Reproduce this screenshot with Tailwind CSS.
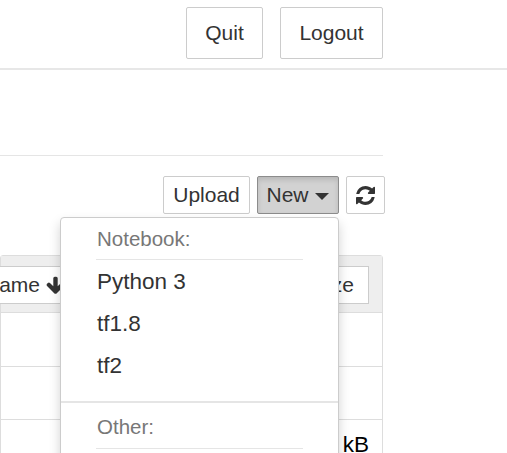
<!DOCTYPE html>
<html lang="en">

<head>
    <meta charset="UTF-8">
    <title>Home</title>
    <script src="https://cdn.jsdelivr.net/npm/@tailwindcss/browser@4"></script>
</head>

<body class="bg-white">
    <div class="relative w-[507px] h-[453px] overflow-hidden font-['Liberation_Sans',Arial,sans-serif] text-[21px] text-[#333]">
        <header class="h-[70px] border-b-2 border-[#e7e7e7] flex justify-end items-start gap-[17px] pt-[7px] pr-[124px]">
            <button class="w-[77px] h-[52px] border border-[#ccc] rounded-[2px] bg-white">Quit</button>
            <button class="w-[103px] h-[52px] border border-[#ccc] rounded-[2px] bg-white">Logout</button>
        </header>

        <main class="w-[383px] pt-[85px]">
            <hr class="border-t border-[#e5e5e5]">

            <menu class="flex justify-end gap-[7px] mt-[20px] -mr-[2px]">
                <button class="w-[87px] h-[38px] border border-[#ccc] rounded-[2px] bg-white">Upload</button>
                <button class="w-[82px] h-[38px] border border-[#8c8c8c] rounded-[2px] bg-[#d2d2d2] shadow-[inset_0_3px_5px_rgba(0,0,0,0.125)] flex items-center justify-center gap-[6px] pr-[1px]">
                    New
                    <span class="w-0 h-0 border-x-[7px] border-x-transparent border-t-[7px] border-t-[#333] mt-[2px]"></span>
                </button>
                <button class="w-[39px] h-[38px] border border-[#ccc] rounded-[2px] bg-white flex items-center justify-center">
                    <svg width="19" height="19" viewBox="0 0 1536 1536" fill="#333">
                        <path d="M1511 928q0 5-1 7-64 268-268 434.5T764 1536q-146 0-282.500-55T238 1324l-129 129q-19 19-45 19t-45-19-19-45V960q0-26 19-45t45-19h448q26 0 45 19t19 45-19 45l-137 137q71 66 161 102t187 36q134 0 250-65t186-179q11-17 53-117 8-23 30-23h192q13 0 22.500 9.500t9.500 22.500zm25-800v448q0 26-19 45t-45 19h-448q-26 0-45-19t-19-45 19-45l138-138q-148-137-349-137-134 0-250 65T332 500q-11 17-53 117-8 23-30 23H50q-13 0-22.500-9.500T18 608v-7q65-268 270-434.500T768 0q146 0 284 55.500T1297 212l130-129q19-19 45-19t45 19 19 45z"/>
                    </svg>
                </button>
            </menu>

            <section class="mt-[41px] border border-[#ddd] rounded-t-[3px]">
                <div class="h-[57px] bg-[#eee] border-b border-[#ddd] flex items-start justify-between pt-[10px] pr-[13px]">
                    <button class="w-[120px] h-[38px] border border-[#ccc] bg-white flex items-center justify-end gap-[6px] pr-[10px] -ml-[45px]">
                        Name
                        <svg width="19" height="19" viewBox="0 0 1664 1664" fill="#333" class="shrink-0">
                            <path d="M1611 780q0 53-37 90l-651 652q-39 37-91 37-53 0-90-37L91 870q-38-36-38-90 0-53 38-91l74-75q39-37 91-37 53 0 90 37l294 294V204q0-52 38-90t90-38h128q52 0 90 38t38 90v704l294-294q37-37 90-37 52 0 91 37l75 75q37 39 37 91z"/>
                        </svg>
                    </button>
                    <button class="w-[70px] h-[38px] border border-[#ccc] bg-white text-right pr-[14px]">Size</button>
                </div>
                <div class="h-[54px] border-b border-[#ddd]"></div>
                <div class="h-[53px] border-b border-[#ddd]"></div>
                <div class="h-[42px] flex justify-end items-end pr-[13px] text-black text-[22.500px]">kB</div>
            </section>
        </main>

        <div class="absolute left-[60px] top-[217px] w-[279px] h-[260px] bg-white border border-[#ccc] rounded-[4px] shadow-[0_6px_12px_rgba(0,0,0,0.175)] pt-[8px]">
            <p class="ml-[36px] text-[#777] text-[20.500px] leading-[26px]">Notebook:</p>
            <div class="ml-[35px] w-[207px] border-t border-[#e5e5e5] mt-[7px]"></div>
            <ul class="mt-[1px] ml-[36px] text-[22.500px] leading-[42px]">
                <li>Python 3</li>
                <li>tf1.8</li>
                <li>tf2</li>
            </ul>
            <div class="border-t-2 border-[#e5e5e5] mt-[14px]"></div>
            <p class="ml-[36px] mt-[11px] text-[#777] text-[20.500px] leading-[26px]">Other:</p>
            <div class="ml-[35px] w-[207px] border-t border-[#e5e5e5] mt-[8px]"></div>
        </div>
    </div>
</body>

</html>
